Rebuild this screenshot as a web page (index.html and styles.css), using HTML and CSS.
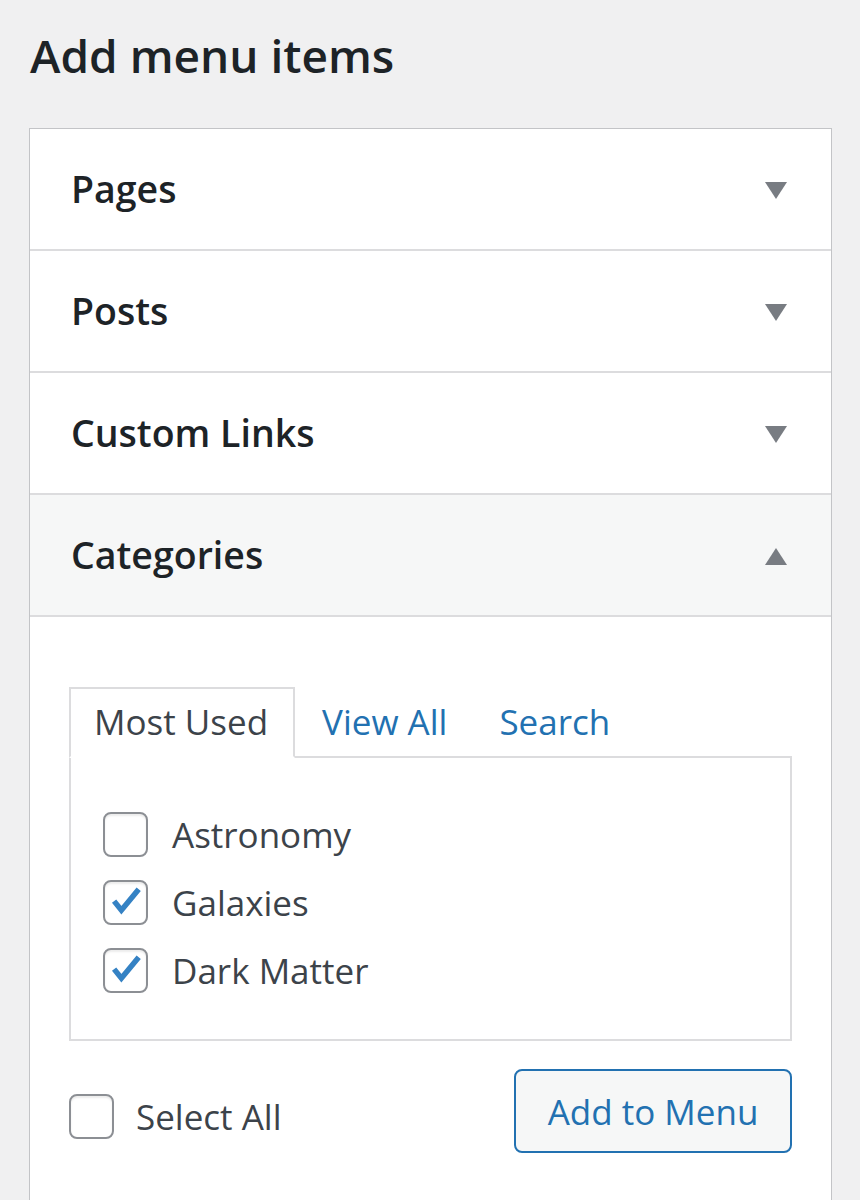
FILE: index.html
```html
<!DOCTYPE html>
<html lang="en">
<head>
<meta charset="utf-8">
<title>Add menu items</title>
<link rel="stylesheet" href="styles.css">
</head>
<body>
<div class="page">
  <h2 class="page-title">Add menu items</h2>
  <div class="accordion">
    <div class="section">
      <h3 class="section-title">Pages<span class="arrow down"></span></h3>
    </div>
    <div class="section">
      <h3 class="section-title">Posts<span class="arrow down"></span></h3>
    </div>
    <div class="section">
      <h3 class="section-title">Custom Links<span class="arrow down"></span></h3>
    </div>
    <div class="section open">
      <h3 class="section-title">Categories<span class="arrow up"></span></h3>
      <div class="section-content">
        <ul class="tabs">
          <li class="tab active">Most Used</li>
          <li class="tab">View All</li>
          <li class="tab">Search</li>
        </ul>
        <div class="tab-panel">
          <label class="item"><span class="cb"></span>Astronomy</label>
          <label class="item"><span class="cb checked"><svg viewBox="0 0 45 45"><polyline points="10,21 18,31 37,8" /></svg></span>Galaxies</label>
          <label class="item"><span class="cb checked"><svg viewBox="0 0 45 45"><polyline points="10,21 18,31 37,8" /></svg></span>Dark Matter</label>
        </div>
        <div class="actions">
          <label class="item select-all"><span class="cb"></span>Select All</label>
          <button class="btn">Add to Menu</button>
        </div>
      </div>
    </div>
  </div>
</div>
</body>
</html>
```
FILE: styles.css
```css
html, body {
  margin: 0;
  padding: 0;
  background: #f0f0f1;
}
body {
  font-family: "Open Sans", "Noto Sans", sans-serif;
  color: #1d2327;
  height: 1200px;
  overflow: hidden;
}
.page {
  padding: 0 28px 0 29px;
}
.page-title {
  margin: 0;
  padding: 23px 0 0 1px;
  height: 128px;
  box-sizing: border-box;
  font-size: 46px;
  font-weight: 600;
  line-height: 64px;
  color: #1d2327;
}
.accordion {
  width: 803px;
  box-sizing: border-box;
  border: 1px solid #c3c4c7;
  border-bottom: none;
  background: #fff;
  min-height: 1072px;
}
.section-title {
  margin: 0;
  height: 122px;
  box-sizing: border-box;
  border-bottom: 2px solid #dcdcde;
  display: flex;
  align-items: center;
  justify-content: space-between;
  padding: 0 44px 2px 41px;
  font-size: 37.5px;
  font-weight: 600;
  color: #1d2327;
}
.open .section-title {
  background: #f6f7f7;
}
.arrow {
  width: 0;
  height: 0;
  border-left: 11px solid transparent;
  border-right: 11px solid transparent;
}
.arrow.down {
  border-top: 17px solid #787c82;
  margin-top: 4px;
}
.arrow.up {
  border-bottom: 17px solid #787c82;
  margin-top: 4px;
}
.section-content {
  padding: 70px 39px 40px 39px;
}
.tabs {
  list-style: none;
  margin: 0;
  padding: 0;
  display: flex;
  height: 70px;
  position: relative;
  z-index: 1;
}
.tab {
  padding: 0 25px;
  font-size: 35px;
  line-height: 70px;
  color: #2271b1;
  margin-right: 2px;
}
.tab.active {
  color: #3c434a;
  border: 2px solid #dcdcde;
  border-bottom: 2px solid #fff;
  background: #fff;
  padding: 0 25px 0 23px;
  height: 71px;
  box-sizing: border-box;
  line-height: 65px;
}
.tab-panel {
  border: 2px solid #dcdcde;
  margin-top: -1px;
  padding: 54px 32px 46px;
  display: flex;
  flex-direction: column;
  gap: 23px;
}
.item {
  display: flex;
  align-items: center;
  gap: 24px;
  font-size: 35px;
  color: #3c434a;
  line-height: 45px;
}
.cb {
  width: 45px;
  height: 45px;
  box-sizing: border-box;
  border: 2px solid #8c8f94;
  border-radius: 8px;
  background: #fff;
  box-shadow: inset 0 2px 2px rgba(0,0,0,0.08);
  flex: none;
  display: flex;
}
.cb svg {
  width: 41px;
  height: 41px;
  fill: none;
  stroke: #3582c4;
  stroke-width: 6;
  stroke-linecap: butt;
  stroke-linejoin: miter;
}
.actions {
  display: flex;
  justify-content: space-between;
  align-items: center;
  margin-top: 28px;
}
.select-all {
  gap: 22px;
  margin-top: 10px;
}
.btn {
  width: 278px;
  height: 84px;
  box-sizing: border-box;
  border: 2px solid #2271b1;
  border-radius: 8px;
  background: #f6f7f7;
  color: #2271b1;
  font-family: inherit;
  font-size: 35px;
  padding: 0;
}
```
